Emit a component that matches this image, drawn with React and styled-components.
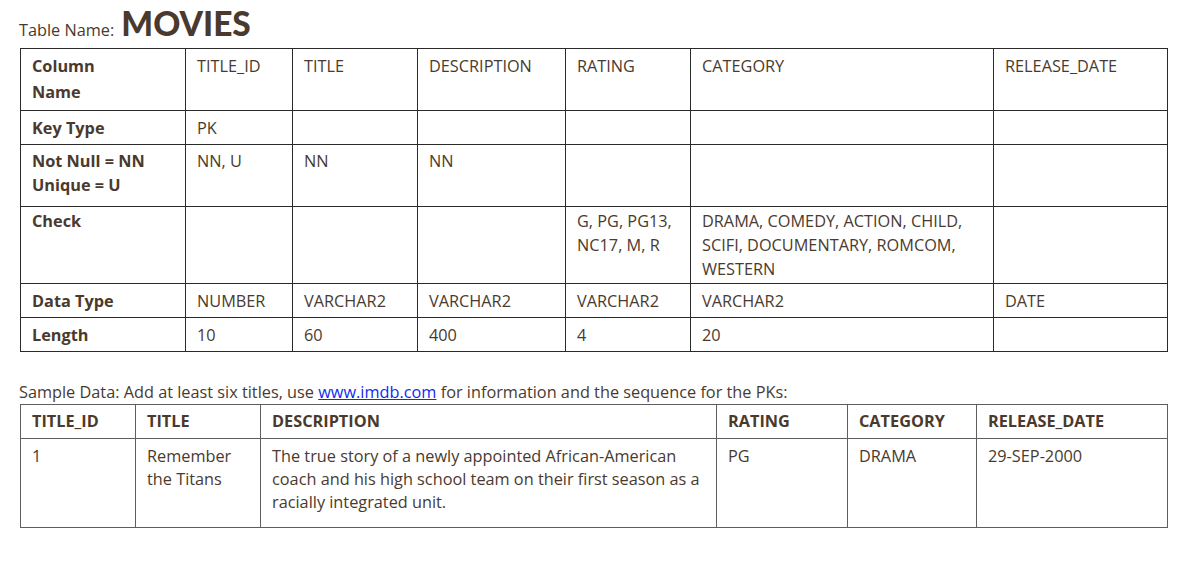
import React from 'react';
import styled, { createGlobalStyle } from 'styled-components';

const GlobalStyle = createGlobalStyle`
	body {
		margin: 0;
		background: #ffffff;
		font-family: 'Open Sans', Lato, sans-serif;
		color: #4a3a2e;
	}
`;

const Page = styled.div`
	padding: 0 0 0 20px;
	width: 1147px;
`;

const TitleLine = styled.div`
	display: flex;
	align-items: baseline;
	gap: 7px;
	height: 48px;
	margin-left: -1px;
	padding-top: 1px;
	box-sizing: border-box;
	.label {
		font-size: 16.3px;
	}
	.name {
		font-family: Lato, 'Open Sans', sans-serif;
		font-size: 33.5px;
		font-weight: 900;
		line-height: 44px;
	}
`;

const Grid = styled.table`
	width: 1147px;
	table-layout: fixed;
	border-collapse: collapse;
	font-size: 16.3px;
	border: 1px solid ${({ $line }) => $line};
	td {
		border: 1px solid ${({ $line }) => $line};
		vertical-align: top;
		padding: 4px 11px 0 11px;
		overflow: hidden;
		white-space: nowrap;
	}
`;

const Row = styled.tr`
	height: ${({ $h }) => $h}px;
	line-height: ${({ $lh }) => $lh || 26}px;
	td {
		padding-top: ${({ $pt }) => ($pt === undefined ? 4 : $pt)}px;
	}
	td.head {
		font-weight: 700;
	}
`;

const Note = styled.div`
	margin-top: 30px;
	font-size: 16.3px;
	line-height: 20px;
	padding-bottom: 2px;
	margin-left: -1px;
	a {
		color: #0f2bef;
		text-decoration: underline;
	}
`;

const Lines = ({ text }) =>
	text.split('\n').map((line, i, all) => (
		<React.Fragment key={i}>
			{line}
			{i < all.length - 1 && <br />}
		</React.Fragment>
	));

const schemaCols = [165, 107, 125, 148, 125, 303, 174];
const schemaRows = [
	{ h: 62, lh: 26, cells: ['Column\nName', 'TITLE_ID', 'TITLE', 'DESCRIPTION', 'RATING', 'CATEGORY', 'RELEASE_DATE'] },
	{ h: 34, cells: ['Key Type', 'PK', '', '', '', '', ''] },
	{ h: 62, lh: 24, cells: ['Not Null = NN\nUnique = U', 'NN, U', 'NN', 'NN', '', '', ''] },
	{
		h: 77,
		lh: 23.8,
		pt: 3,
		cells: ['Check', '', '', '', 'G, PG, PG13,\nNC17, M, R', 'DRAMA, COMEDY, ACTION, CHILD,\nSCIFI, DOCUMENTARY, ROMCOM,\nWESTERN', ''],
	},
	{ h: 34, cells: ['Data Type', 'NUMBER', 'VARCHAR2', 'VARCHAR2', 'VARCHAR2', 'VARCHAR2', 'DATE'] },
	{ h: 34, cells: ['Length', '10', '60', '400', '4', '20', ''] },
];

const sampleCols = [115, 125, 456, 131, 129, 191];
const sampleHead = ['TITLE_ID', 'TITLE', 'DESCRIPTION', 'RATING', 'CATEGORY', 'RELEASE_DATE'];
const sampleData = [
	[
		'1',
		'Remember\nthe Titans',
		'The true story of a newly appointed African-American\ncoach and his high school team on their first season as a\nracially integrated unit.',
		'PG',
		'DRAMA',
		'29-SEP-2000',
	],
];

const App = () => {
	return (
		<Page>
			<GlobalStyle />
			<TitleLine>
				<span className="label">Table Name:</span>
				<span className="name">MOVIES</span>
			</TitleLine>
			<Grid $line="#2a2a2a">
				<colgroup>
					{schemaCols.map((w, i) => (
						<col key={i} style={{ width: w }} />
					))}
				</colgroup>
				<tbody>
					{schemaRows.map((row, r) => (
						<Row key={r} $h={row.h} $lh={row.lh} $pt={row.pt}>
							{row.cells.map((c, i) => (
								<td key={i} className={i === 0 ? 'head' : ''}>
									<Lines text={c} />
								</td>
							))}
						</Row>
					))}
				</tbody>
			</Grid>
			<Note>
				Sample Data: Add at least six titles, use <a href="#">www.imdb.com</a> for information and the sequence for
				the PKs:
			</Note>
			<Grid $line="#5e5e5e">
				<colgroup>
					{sampleCols.map((w, i) => (
						<col key={i} style={{ width: w }} />
					))}
				</colgroup>
				<tbody>
					<Row $h={34} $pt={3}>
						{sampleHead.map((c) => (
							<td key={c} className="head">
								{c}
							</td>
						))}
					</Row>
					{sampleData.map((row, r) => (
						<Row key={r} $h={89} $lh={23} $pt={6}>
							{row.map((c, i) => (
								<td key={i}>
									<Lines text={c} />
								</td>
							))}
						</Row>
					))}
				</tbody>
			</Grid>
		</Page>
	);
};

export default App;
